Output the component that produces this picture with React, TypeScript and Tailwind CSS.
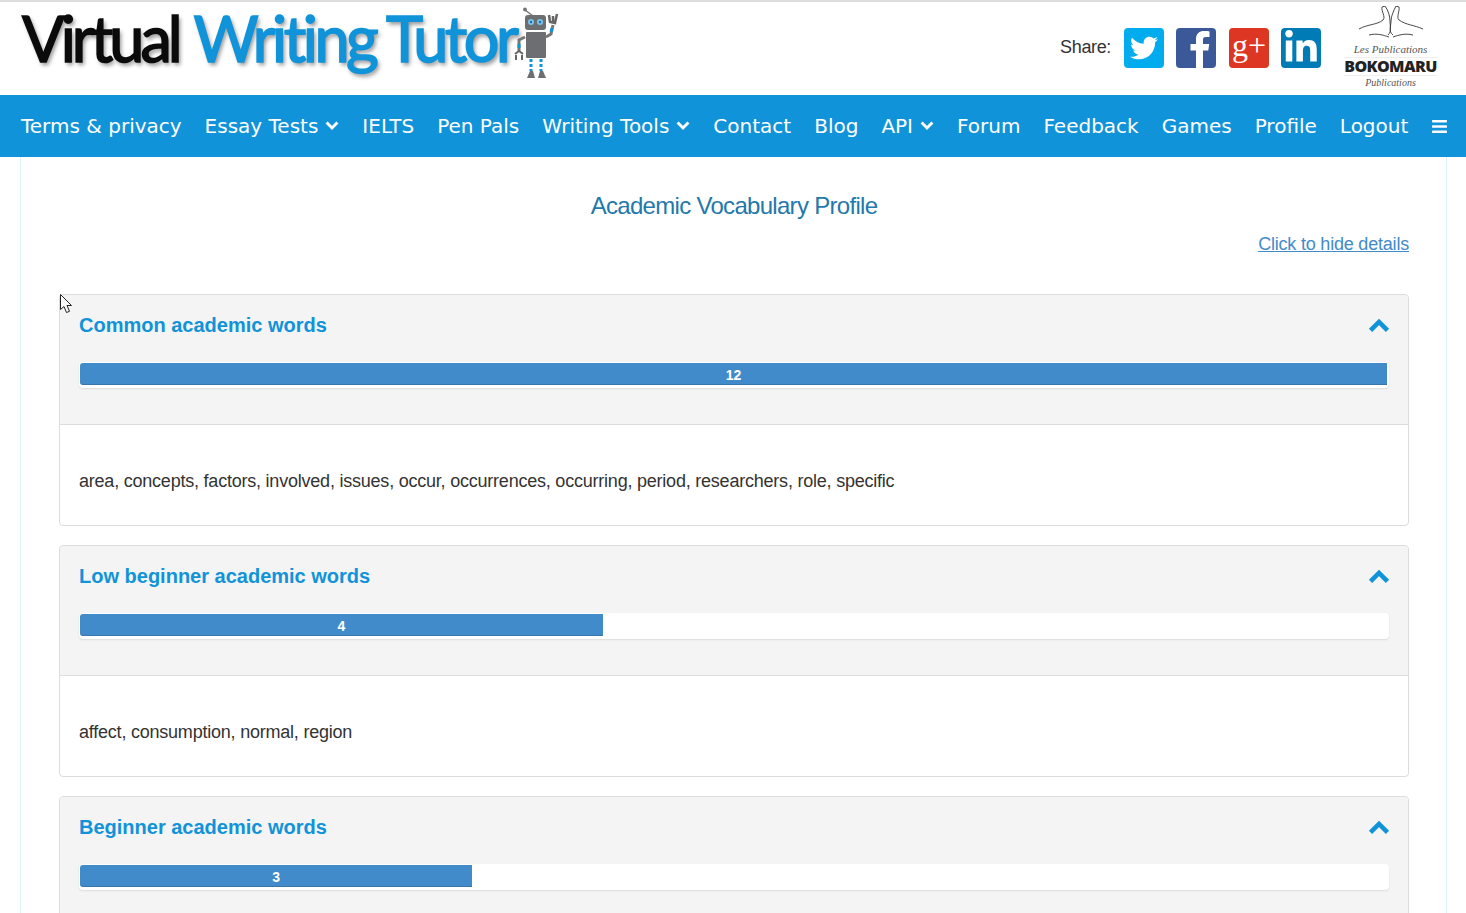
import React from "react";
import { FaTwitter, FaBars, FaLinkedinIn } from "react-icons/fa";

const nav: [string, boolean][] = [
  ["Terms & privacy", false], ["Essay Tests", true], ["IELTS", false], ["Pen Pals", false],
  ["Writing Tools", true], ["Contact", false], ["Blog", false], ["API", true], ["Forum", false],
  ["Feedback", false], ["Games", false], ["Profile", false], ["Logout", false],
];

function Chevron({ up, size }: { up?: boolean; size: number }) {
  return (
    <svg width={size} height={size * 0.68} viewBox="0 0 22 15" className="block">
      <path d={up ? "M2.5 12.5 L11 4 L19.5 12.5" : "M2.5 2.5 L11 11 L19.5 2.5"} fill="none" stroke="currentColor" strokeWidth="4.6" />
    </svg>
  );
}

function Robot() {
  return (
    <svg width="48" height="74" viewBox="0 0 48 74" className="absolute left-[513px] top-[5px]">
      <circle cx="12" cy="2.5" r="2" fill="#777" />
      <path d="M12 3 L20 9" stroke="#777" strokeWidth="1.5" />
      <rect x="12" y="8" width="21" height="15" rx="3" fill="#6d6e71" />
      <circle cx="18" cy="15" r="3" fill="#7cc4ee" />
      <circle cx="27" cy="15" r="3" fill="#7cc4ee" />
      <circle cx="18" cy="15" r="1.2" fill="#1a6fa8" />
      <circle cx="27" cy="15" r="1.2" fill="#1a6fa8" />
      <rect x="13" y="25" width="20" height="26" rx="1" fill="#6d6e71" />
      <path d="M12 30 L6 33 L6 44" stroke="#777" strokeWidth="3" fill="none" />
      <path d="M6 37 V41" stroke="#1193d9" strokeWidth="3" />
      <path d="M2 47 L6 44 L10 47 M3 48 V53 M9 48 V53" stroke="#666" strokeWidth="2" fill="none" />
      <path d="M33 30 L38 27 L40 18" stroke="#777" strokeWidth="3" fill="none" />
      <path d="M38 25 L39 21" stroke="#1193d9" strokeWidth="3" />
      <path d="M36 8 L37 15 L42 16 L44 7 M40 15 V9" stroke="#666" strokeWidth="2.5" fill="none" />
      <path d="M18 52 V64 M28 52 V64" stroke="#1193d9" strokeWidth="3" strokeDasharray="3 2" />
      <path d="M14 71 L17 64 H20 L22 71 Z M25 71 L27 64 H30 L33 71 Z" fill="#6d6e71" />
    </svg>
  );
}

function Dancers() {
  return (
    <svg width="64" height="32" viewBox="0 0 64 32" className="block">
      <g stroke="#333" strokeWidth="0.9" fill="none">
        <path d="M0 23 C9 18 18 19 24 14 C27 11 22 5 23 1 L26 0 C29 4 31 10 31 15 C31 21 33 25 29 29" />
        <path d="M64 23 C55 19 47 19 40 14 C37 11 41 5 40 1 L37 0 C35 4 32 10 32 15 C32 21 29 25 34 29" />
        <path d="M10 29 C18 27 24 29 30 31 M54 29 C46 27 40 29 34 31" />
      </g>
    </svg>
  );
}

function Panel({ title, value, pct, words }: { title: string; value: number; pct: string; words?: string }) {
  return (
    <section className="mb-[19px] rounded-[4px] border border-[#dddddd] bg-white">
      <div className="h-[130px] rounded-t-[4px] border-b border-[#dddddd] bg-[#f4f4f4] px-[19px]">
        <div className="flex h-[61px] items-center justify-between">
          <h3 className="mb-[2px] text-[20px] leading-[22px] font-bold text-[#1193d9]">{title}</h3>
          <span className="mr-[-1px] text-[#1193d9]"><Chevron up size={22} /></span>
        </div>
        <div className="mt-[6px] h-[26px] rounded-[4px] bg-white py-[1px] pl-[1px] pr-[2px] shadow-[0_1px_2px_rgba(0,0,0,0.1)]">
          <div className={`flex h-[22px] items-center justify-center rounded-l-[3px] bg-[#428bca] pt-[2px] text-[14px] font-bold text-white shadow-[inset_0_-1px_0_rgba(0,0,0,0.15)] ${pct}`}>
            {value}
          </div>
        </div>
      </div>
      {words && <p className="h-[100px] px-[19px] pt-[45px] text-[18px] leading-[22px] tracking-[-0.22px] text-[#333333]">{words}</p>}
    </section>
  );
}

export default function App() {
  return (
    <div className="relative h-[913px] w-[1466px] overflow-hidden bg-white font-['Liberation_Sans',sans-serif] text-[#333333]">
      <header className="relative h-[95px] border-t-2 border-[#dddddd]">
        <div className="absolute left-[22px] top-[-2px] flex items-baseline gap-[9px] font-['Lato',sans-serif] text-[63px] leading-[76px] [text-shadow:2px_3px_4px_rgba(0,0,0,0.45)]">
          <span className="pr-[6px] tracking-[-4px] text-[#0b0b0b] [-webkit-text-stroke:1.6px_#0b0b0b]">Virtual</span>
          <span className="pr-[6px] tracking-[-3.5px] text-[#1193d9] [-webkit-text-stroke:1.6px_#1193d9]">Writing Tutor</span>
        </div>
        <Robot />
        <div className="absolute right-[29px] top-[4px] flex items-center">
          <span className="mr-[13px] text-[18px] tracking-[-0.35px]">Share:</span>
          <div className="flex gap-[12px]">
            <span className="flex h-10 w-10 items-center justify-center rounded-[4px] bg-[#00aced] text-[28px] text-white"><FaTwitter /></span>
            <span className="flex h-10 w-10 overflow-hidden rounded-[4px] bg-[#3b5998]">
              <svg width="40" height="40" viewBox="0 0 40 40">
                <path d="M16 40 V22.5 H10.5 V16 H16 V11 C16 5.5 19.5 3 24 3 C26.5 3 28.5 3.2 29.5 3.4 V9 H26 C23.5 9 23 10.3 23 12 V16 H29.2 L28.3 22.5 H23 V40 Z" fill="white" transform="translate(4 0)" />
              </svg>
            </span>
            <span className="ml-[1px] flex h-10 w-10 items-center justify-center rounded-[4px] bg-[#dd3724] pb-[6px] font-['Liberation_Serif',serif] text-[32px] leading-none text-white">g+</span>
            <span className="flex h-10 w-10 items-center justify-center rounded-[4px] bg-[#007bb6] text-[36px] text-white"><FaLinkedinIn /></span>
          </div>
          <div className="ml-[23px] flex w-[93px] flex-col items-center">
            <Dancers />
            <span className="mt-[5px] font-['Liberation_Serif',serif] text-[11px] leading-[12px] italic text-[#555555]">Les Publications</span>
            <span className="mt-[2px] border-y border-[#eeeeee] font-['Open_Sans',sans-serif] text-[16px] leading-[17px] font-extrabold tracking-[-0.6px] text-[#222222]">BOKOMARU</span>
            <span className="mt-[1px] font-['Liberation_Serif',serif] text-[10px] leading-[12px] italic text-[#555555]">Publications</span>
          </div>
        </div>
      </header>

      <nav className="flex h-[62px] items-center gap-[23px] bg-[#1193d9] pl-[21px] font-['DejaVu_Sans',sans-serif] text-[20px] text-white">
        {nav.map(([label, caret]) => (
          <span key={label} className="flex items-center gap-[7px] whitespace-nowrap">
            {label}
            {caret && <Chevron size={14} />}
          </span>
        ))}
        <FaBars className="text-[17px]" />
      </nav>

      <main className="ml-[20px] mr-[19px] h-[756px] border-x border-[#dbf1ff] pl-[38px] pr-[37px]">
        <h2 className="pt-[34px] text-center text-[24px] leading-[30px] tracking-[-0.7px] text-[#2378ac]">Academic Vocabulary Profile</h2>
        <div className="mt-[12px] text-right">
          <a className="text-[18px] leading-[22px] tracking-[-0.2px] text-[#428bca] underline">Click to hide details</a>
        </div>
        <div className="mt-[37px]">
          <Panel title="Common academic words" value={12} pct="w-full" words="area, concepts, factors, involved, issues, occur, occurrences, occurring, period, researchers, role, specific" />
          <Panel title="Low beginner academic words" value={4} pct="w-[40%]" words="affect, consumption, normal, region" />
          <Panel title="Beginner academic words" value={3} pct="w-[30%]" />
        </div>
      </main>

      <svg width="14" height="20" viewBox="0 0 14 20" className="absolute left-[60px] top-[294px]">
        <path d="M0.5 0.5 V15.5 L4 12.5 L6.5 18.5 L9.5 17.3 L7 11.5 H11.5 Z" fill="white" stroke="#222" strokeWidth="1" />
      </svg>
    </div>
  );
}
